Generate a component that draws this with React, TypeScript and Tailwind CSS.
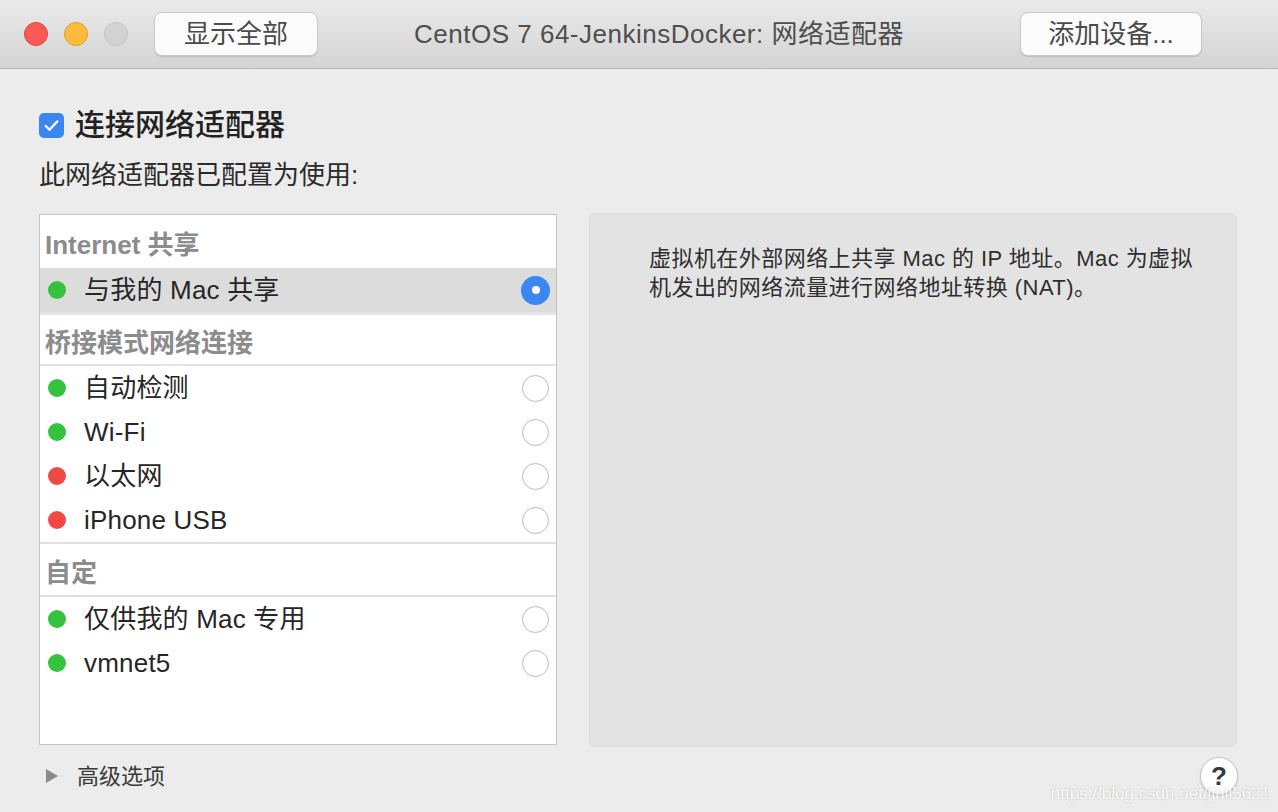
import React from "react";

const font = {
  fontFamily:
    '"Liberation Sans", "Noto Sans CJK SC", "Noto Sans", sans-serif',
};

type Row = { label: string; color: "green" | "red"; selected?: boolean };

const bridged: Row[] = [
  { label: "自动检测", color: "green" },
  { label: "Wi-Fi", color: "green" },
  { label: "以太网", color: "red" },
  { label: "iPhone USB", color: "red" },
];

const custom: Row[] = [
  { label: "仅供我的 Mac 专用", color: "green" },
  { label: "vmnet5", color: "green" },
];

function ListRow({ row }: { row: Row }) {
  return (
    <div
      className={`flex h-[44px] items-center ${
        row.selected ? "bg-[#dcdcdc]" : ""
      }`}
    >
      <span
        className={`ml-[8px] h-[18px] w-[18px] rounded-full ${
          row.color === "green" ? "bg-[#36c23d]" : "bg-[#f04943]"
        }`}
      />
      <span className="ml-[18px] text-[26px] leading-[30px] tracking-[0.2px] text-[#262626]">
        {row.label}
      </span>
      {row.selected ? (
        <span className="ml-auto mr-[6px] flex h-[29px] w-[29px] items-center justify-center rounded-full bg-[#3a86f2]">
          <span className="h-[8px] w-[8px] rounded-full bg-white" />
        </span>
      ) : (
        <span className="ml-auto mr-[7px] h-[27px] w-[27px] rounded-full border-[1.5px] border-[#b9b9b9] bg-white" />
      )}
    </div>
  );
}

function Header({ children, cls }: { children: React.ReactNode; cls: string }) {
  return (
    <div
      className={`flex items-end pl-[5px] text-[26px] font-semibold leading-[30px] text-[#8c8c8c] ${cls}`}
    >
      {children}
    </div>
  );
}

export default function App() {
  return (
    <div
      className="relative flex h-[812px] w-[1278px] flex-col overflow-hidden bg-[#ececec]"
      style={font}
    >
      {/* toolbar */}
      <div className="flex h-[69px] shrink-0 items-center border-b border-[#b4b4b4] bg-gradient-to-b from-[#eaeaea] to-[#d4d4d4] pl-[24px] pr-[76px]">
        <div className="flex items-center gap-[16px]">
          <span className="h-[24px] w-[24px] rounded-full border border-[#e0443e] bg-[#fc5a55]" />
          <span className="h-[24px] w-[24px] rounded-full border border-[#dea030] bg-[#fdbb3c]" />
          <span className="h-[24px] w-[24px] rounded-full border border-[#c4c4c4] bg-[#d2d2d2]" />
        </div>
        <button className="ml-[26px] flex h-[44px] w-[164px] items-center justify-center rounded-[8px] border border-[#c9c9c9] bg-[#fbfbfb] text-[26px] text-[#4a4a4a] shadow-[0_1px_1px_rgba(0,0,0,0.12)]">
          显示全部
        </button>
        <div className="flex flex-1 justify-center pr-[20px] text-[26px] tracking-[0.5px] text-[#4e4e4e]">
          CentOS 7 64-JenkinsDocker: 网络适配器
        </div>
        <button className="flex h-[44px] w-[182px] items-center justify-center rounded-[8px] border border-[#c9c9c9] bg-[#fbfbfb] text-[26px] text-[#4a4a4a] shadow-[0_1px_1px_rgba(0,0,0,0.12)]">
          添加设备...
        </button>
      </div>

      {/* body */}
      <div className="flex flex-1 flex-col pl-[39px] pr-[41px] pt-[41px]">
        <div className="flex h-[30px] items-center gap-[11px]">
          <span className="flex h-[25px] w-[25px] items-center justify-center rounded-[5px] bg-[#3a86f2]">
            <svg width="19" height="19" viewBox="0 0 16 16" fill="none">
              <path
                d="M3.2 8.4l3.1 3.2L12.8 4.6"
                stroke="white"
                strokeWidth="2"
                strokeLinecap="round"
                strokeLinejoin="round"
              />
            </svg>
          </span>
          <span className="text-[30px] font-medium leading-[30px] text-[#222]">
            连接网络适配器
          </span>
        </div>
        <div className="mt-[20px] text-[26px] leading-[30px] text-[#2b2b2b]">
          此网络适配器已配置为使用:
        </div>

        <div className="mt-[24px] flex items-start gap-[32px]">
          {/* list */}
          <div className="flex h-[531px] w-[518px] flex-col border border-[#c4c4c4] bg-white">
            <Header cls="h-[53px] pb-[8px]">Internet 共享</Header>
            <ListRow row={{ label: "与我的 Mac 共享", color: "green", selected: true }} />
            <Header cls="h-[54px] border-t-[3px] border-b-2 border-[#e4e4e4] pb-[6px]">
              桥接模式网络连接
            </Header>
            {bridged.map((r) => (
              <ListRow key={r.label} row={r} />
            ))}
            <Header cls="h-[55px] border-t-2 border-b-2 border-[#e0e0e0] pb-[7px]">
              自定
            </Header>
            {custom.map((r) => (
              <ListRow key={r.label} row={r} />
            ))}
          </div>

          {/* description */}
          <div className="-mt-px h-[534px] w-[648px] rounded-[6px] border border-[#dadada] bg-[#e3e3e3] pl-[59px] pt-[30px]">
            <p className="w-[565px] text-[22px] leading-[29px] tracking-[0.45px] text-[#2e2e2e]">
              虚拟机在外部网络上共享 Mac 的 IP 地址。Mac 为虚拟机发出的网络流量进行网络地址转换 (NAT)。
            </p>
          </div>
        </div>

        {/* footer */}
        <div className="mt-[12px] flex h-[34px] items-center justify-between">
          <div className="flex items-center">
            <svg width="14" height="16" viewBox="0 0 14 16" className="ml-[6px]">
              <path d="M1 1l12 7-12 7z" fill="#8a8a8a" />
            </svg>
            <span className="ml-[18px] text-[22px] text-[#3a3a3a]">高级选项</span>
          </div>
          <span className="-mr-px flex h-[38px] w-[38px] items-center justify-center rounded-full border border-[#c6c6c6] bg-white text-[26px] font-bold text-[#3a3a3a] shadow-[0_1px_2px_rgba(0,0,0,0.15)]">
            ?
          </span>
        </div>
      </div>

      {/* watermark */}
      <div className="pointer-events-none absolute bottom-[6px] right-[8px] text-[17px] text-white/90 [text-shadow:0_0_2px_rgba(0,0,0,0.25)]">
        https://blog.csdn.net/jinli5621
      </div>
    </div>
  );
}
